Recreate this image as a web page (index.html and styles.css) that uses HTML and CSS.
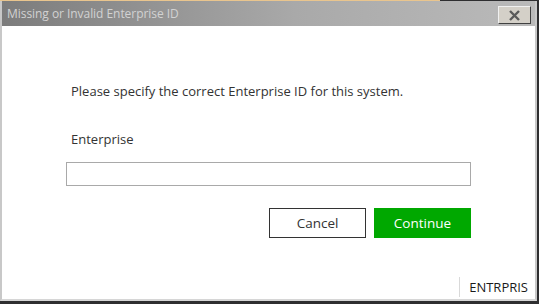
FILE: index.html
```html
<!DOCTYPE html>
<html>
<head>
<meta charset="utf-8">
<link rel="stylesheet" href="styles.css">
</head>
<body>
<div class="strip"></div>
<div class="window">
  <div class="titlebar">
    <span class="title">Missing or Invalid Enterprise ID</span>
    <button class="close" aria-label="Close">
      <svg width="13" height="11" viewBox="0 0 13 11"><path d="M2 1 L11 10 M11 1 L2 10" stroke="#5a5a5a" stroke-width="2.4" fill="none"/></svg>
    </button>
  </div>
  <div class="body">
    <p class="message">Please specify the correct Enterprise ID for this system.</p>
    <label class="label" for="ent">Enterprise</label>
    <input class="field" id="ent" type="text">
    <div class="actions">
      <button class="btn cancel">Cancel</button>
      <button class="btn continue">Continue</button>
    </div>
  </div>
  <div class="footer">
    <span class="sep"></span>
    <span class="code">ENTRPRIS</span>
  </div>
</div>
</body>
</html>
```
FILE: styles.css
```css
html, body {
  margin: 0;
  padding: 0;
}
body {
  width: 539px;
  height: 304px;
  background: #2e2e30;
  overflow: hidden;
  font-family: "Open Sans", "Noto Sans", sans-serif;
}
.strip {
  width: 440px;
  height: 1px;
  background: #e9c58e;
}
.window {
  width: 533px;
  height: 298px;
  background: #fff;
  border-left: 2px solid #c8c8c8;
  border-right: 2px solid #c8c8c8;
  border-bottom: 2px solid #d6d6d6;
  display: flex;
  flex-direction: column;
  box-sizing: content-box;
}
.titlebar {
  height: 25px;
  flex: none;
  background: linear-gradient(to right, #7c7c7c, #a9a9a9 55%, #bababa);
  display: flex;
  align-items: center;
  justify-content: space-between;
  padding-left: 5px;
  padding-right: 4px;
}
.title {
  color: #d2d2d2;
  font-size: 12px;
  letter-spacing: -0.05px;
}
.close {
  width: 33px;
  height: 18px;
  margin-top: 3px;
  padding: 0;
  background: #d4d0c8;
  border: 1px solid #f0f0f0;
  border-right-color: #404040;
  border-bottom-color: #404040;
  display: flex;
  align-items: center;
  justify-content: center;
}
.body {
  flex: 1;
  padding: 0 0 0 64px;
  display: flex;
  flex-direction: column;
  align-items: flex-start;
}
.message {
  margin: 56px 0 0 5px;
  font-size: 13px;
  color: #333;
  line-height: 18px;
}
.label {
  margin: 30px 0 0 5px;
  font-size: 13px;
  color: #333;
  line-height: 18px;
}
.field {
  margin: 14px 0 0 0;
  width: 405px;
  height: 24px;
  box-sizing: border-box;
  border: 1px solid #a9a9a9;
  padding: 0;
  outline: none;
}
.actions {
  margin-top: 22px;
  width: 405px;
  display: flex;
  justify-content: flex-end;
  gap: 8px;
}
.btn {
  width: 97px;
  height: 30px;
  box-sizing: border-box;
  font-family: inherit;
  font-size: 13.5px;
  padding: 0;
}
.cancel {
  background: #fff;
  border: 1px solid #333;
  color: #333;
}
.continue {
  background: #00a800;
  border: none;
  color: #fff;
}
.footer {
  height: 22px;
  flex: none;
  display: flex;
  justify-content: flex-end;
  align-items: center;
  gap: 9px;
  padding-right: 7px;
  margin-bottom: 1px;
}
.sep {
  width: 1px;
  height: 20px;
  background: #d9d9d9;
}
.code {
  font-size: 13px;
  color: #1a1a1a;
}
```
